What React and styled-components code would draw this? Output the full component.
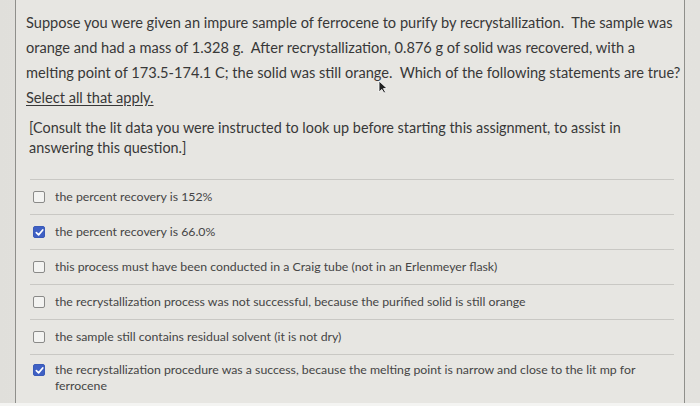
import React from 'react'
import styled, {createGlobalStyle} from 'styled-components'

const GlobalStyle = createGlobalStyle`
  html, body {
    margin: 0;
    padding: 0;
    background: #e5e4e0;
  }
  body {
    font-family: Lato, 'Open Sans', 'Liberation Sans', sans-serif;
  }
`

const Frame = styled.div`
  height: 406px;
  box-sizing: border-box;
  padding-left: 15px;
  overflow: hidden;
  background: linear-gradient(90deg, #e0dfdb 0%, #e8e7e3 40%, #e3e2de 100%);
  border-bottom: 3px solid #f4f4f2;
`

const Card = styled.div`
  position: relative;
  width: 670px;
  height: 403px;
  box-sizing: border-box;
  border-left: 1px solid #8f8f8b;
  border-right: 1px solid #8f8f8b;
  padding: 10px 0 0 10px;
  background: #e7e6e2;
`

const Question = styled.p`
  margin: 0;
  font-size: 14.6px;
  line-height: 25px;
  color: #383838;
  white-space: nowrap;
`

const Underlined = styled.span`
  text-decoration: underline;
  text-underline-offset: 2px;
`

const Note = styled.p`
  margin: 8px 0 0;
  padding-left: 3px;
  font-size: 14.4px;
  line-height: 20px;
  color: #383838;
  white-space: nowrap;
`

const OptionList = styled.ul`
  list-style: none;
  margin: 21px 10px 0 4px;
  padding: 0;
`

const Option = styled.li`
  display: flex;
  align-items: ${p => (p.$multi ? 'flex-start' : 'center')};
  gap: 10px;
  min-height: ${p => (p.$last ? '44px' : '35px')};
  box-sizing: border-box;
  padding: ${p => (p.$multi ? '7px 0 0 3px' : '0 0 0 3px')};
  border-top: 1px solid #c9c8c4;
  font-size: 12.3px;
  line-height: 16px;
  color: #454545;
`

const Label = styled.span`
  max-width: 600px;
`

const Box = styled.span`
  flex: none;
  width: 12px;
  height: 12px;
  margin-top: ${p => (p.$multi ? '2px' : '0')};
  box-sizing: border-box;
  border-radius: 2px;
  border: 1.5px solid ${p => (p.$checked ? '#3a5ab8' : '#8a8a88')};
  background: ${p => (p.$checked ? '#3f60c4' : '#f3f3f1')};
  display: flex;
  align-items: center;
  justify-content: center;
`

const Cursor = styled.svg`
  position: absolute;
  left: 361px;
  top: 80px;
`

const Check = () => (
  <svg width="9" height="9" viewBox="0 0 10 10">
    <path d="M1.5 5.2 L4 7.6 L8.6 2.2" fill="none" stroke="#fff" strokeWidth="1.9" strokeLinecap="round" strokeLinejoin="round" />
  </svg>
)

const options = [
  {text: 'the percent recovery is 152%', checked: false},
  {text: 'the percent recovery is 66.0%', checked: true},
  {text: 'this process must have been conducted in a Craig tube (not in an Erlenmeyer flask)', checked: false},
  {text: 'the recrystallization process was not successful, because the purified solid is still orange', checked: false},
  {text: 'the sample still contains residual solvent (it is not dry)', checked: false},
  {
    text: 'the recrystallization procedure was a success, because the melting point is narrow and close to the lit mp for ferrocene',
    checked: true,
    multi: true
  }
]

export default function App() {
  return (
    <Frame>
      <GlobalStyle />
      <Card>
        <Question>
          Suppose you were given an impure sample of ferrocene to purify by recrystallization.&nbsp; The sample was
          <br />
          orange and had a mass of 1.328 g.&nbsp; After recrystallization, 0.876 g of solid was recovered, with a
          <br />
          melting point of 173.5-174.1 C; the solid was still orange.&nbsp; Which of the following statements are true?
          <br />
          <Underlined>Select all that apply.</Underlined>
        </Question>
        <Note>
          [Consult the lit data you were instructed to look up before starting this assignment, to assist in
          <br />
          answering this question.]
        </Note>
        <OptionList>
          {options.map((o, i) => (
            <Option key={i} $multi={o.multi} $last={i === options.length - 1}>
              <Box $checked={o.checked} $multi={o.multi}>{o.checked && <Check />}</Box>
              <Label>{o.text}</Label>
            </Option>
          ))}
        </OptionList>
        <Cursor width="12" height="14" viewBox="0 0 12 14">
          <path d="M2 1 L2 12 L4.8 9.4 L7 13 L8.6 12.2 L6.4 8.6 L10 8.4 Z" fill="#222" stroke="#fff" strokeWidth="0.8" />
        </Cursor>
      </Card>
    </Frame>
  )
}
